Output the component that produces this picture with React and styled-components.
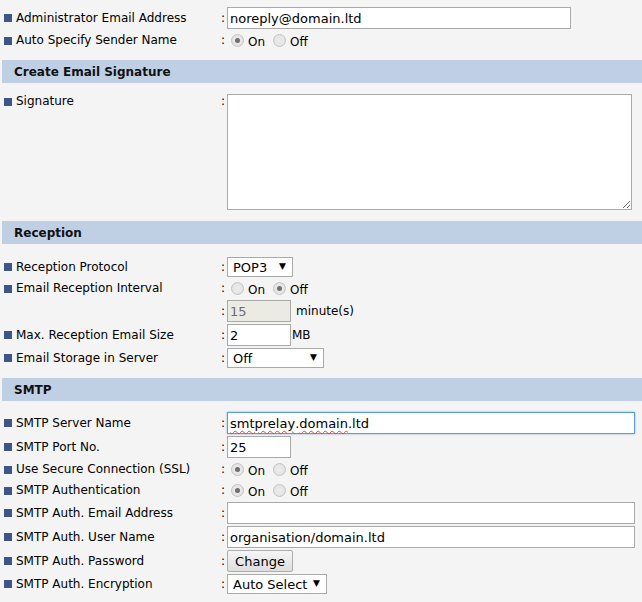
import styled, { createGlobalStyle } from "styled-components";
import { useState } from "react";

const GlobalStyle = createGlobalStyle`
body {
  margin: 0;
  background: #f4f4f4;
  font-family: "DejaVu Sans", Verdana, sans-serif;
  font-size: 12px;
  color: #000;
}
`

const Radios = ({ name, value, onChange }) => (
    <RadioGroup>
        <RadioLabel>
            <Radio type="radio" name={name} checked={value} onChange={() => onChange(true)} />
            On
        </RadioLabel>
        <RadioLabel>
            <Radio type="radio" name={name} checked={!value} onChange={() => onChange(false)} />
            Off
        </RadioLabel>
    </RadioGroup>
)

const Dropdown = ({ width, value, options }) => (
    <SelectWrap $w={width}>
        <Select defaultValue={value}>
            {options.map((o) => <option key={o}>{o}</option>)}
        </Select>
        <Arrow>▼</Arrow>
    </SelectWrap>
)

const App = () => {
    const [senderName, setSenderName] = useState(true);
    const [interval, setInterval] = useState(false);
    const [ssl, setSsl] = useState(true);
    const [auth, setAuth] = useState(true);

    return (
        <Page>
            <GlobalStyle />
            <Section $top={6}>
                <Row>
                    <Label>Administrator Email Address</Label>
                    <Colon>:</Colon>
                    <Field><TextInput $w={344} defaultValue="noreply@domain.ltd" /></Field>
                </Row>
                <Row>
                    <Label>Auto Specify Sender Name</Label>
                    <Colon>:</Colon>
                    <Field><Radios name="sender" value={senderName} onChange={setSenderName} /></Field>
                </Row>
            </Section>

            <Band $gap={9}>Create Email Signature</Band>
            <Section $top={10}>
                <Row $top>
                    <Label>Signature</Label>
                    <Colon>:</Colon>
                    <Field><TextArea /></Field>
                </Row>
            </Section>

            <Band $gap={10}>Reception</Band>
            <Section $top={12}>
                <Row>
                    <Label>Reception Protocol</Label>
                    <Colon>:</Colon>
                    <Field><Dropdown width={66} value="POP3" options={["POP3", "IMAP"]} /></Field>
                </Row>
                <Row>
                    <Label>Email Reception Interval</Label>
                    <Colon>:</Colon>
                    <Field><Radios name="interval" value={interval} onChange={setInterval} /></Field>
                </Row>
                <Row>
                    <Label $plain />
                    <Colon>:</Colon>
                    <Field>
                        <TextInput $w={64} defaultValue="15" disabled />
                        <Unit $gap={5}>minute(s)</Unit>
                    </Field>
                </Row>
                <Row>
                    <Label>Max. Reception Email Size</Label>
                    <Colon>:</Colon>
                    <Field>
                        <TextInput $w={64} defaultValue="2" />
                        <Unit>MB</Unit>
                    </Field>
                </Row>
                <Row>
                    <Label>Email Storage in Server</Label>
                    <Colon>:</Colon>
                    <Field><Dropdown width={97} value="Off" options={["Off", "On"]} /></Field>
                </Row>
            </Section>

            <Band $gap={9}>SMTP</Band>
            <Section $top={10}>
                <Row>
                    <Label>SMTP Server Name</Label>
                    <Colon>:</Colon>
                    <Field>
                        {/* focused field, with the spell check marks */}
                        <FakeInput role="textbox" $w={408} $focus>
                            <Typo>smtprelay</Typo>.<Typo>domain</Typo>.ltd
                        </FakeInput>
                    </Field>
                </Row>
                <Row>
                    <Label>SMTP Port No.</Label>
                    <Colon>:</Colon>
                    <Field><TextInput $w={64} defaultValue="25" /></Field>
                </Row>
                <Row>
                    <Label>Use Secure Connection (SSL)</Label>
                    <Colon>:</Colon>
                    <Field><Radios name="ssl" value={ssl} onChange={setSsl} /></Field>
                </Row>
                <Row>
                    <Label>SMTP Authentication</Label>
                    <Colon>:</Colon>
                    <Field><Radios name="auth" value={auth} onChange={setAuth} /></Field>
                </Row>
                <Row>
                    <Label>SMTP Auth. Email Address</Label>
                    <Colon>:</Colon>
                    <Field><TextInput $w={408} defaultValue="" /></Field>
                </Row>
                <Row>
                    <Label>SMTP Auth. User Name</Label>
                    <Colon>:</Colon>
                    <Field><TextInput $w={408} defaultValue="organisation/domain.ltd" /></Field>
                </Row>
                <Row>
                    <Label>SMTP Auth. Password</Label>
                    <Colon>:</Colon>
                    <Field><Button type="button">Change</Button></Field>
                </Row>
                <Row>
                    <Label>SMTP Auth. Encryption</Label>
                    <Colon>:</Colon>
                    <Field><Dropdown width={100} value="Auto Select" options={["Auto Select", "SSL/TLS", "None"]} /></Field>
                </Row>
            </Section>
        </Page>
    )
}

const Page = styled.div`
width: 642px;
height: 602px;
overflow: hidden;
`
const Section = styled.div`
padding-top: ${(p) => p.$top || 0}px;
`
const Band = styled.div`
margin: ${(p) => p.$gap}px 0 0 2px;
height: 23px;
background: #bfcfe4;
display: flex;
align-items: center;
padding-left: 12px;
font-weight: bold;
font-size: 12px;
color: #111;
`
const Row = styled.div`
display: grid;
grid-template-columns: 221px 6px 1fr;
align-items: ${(p) => (p.$top ? "start" : "center")};
padding: 1px 0;
`
const Label = styled.div`
display: flex;
align-items: center;
padding-left: 4px;
gap: 4px;
line-height: 15px;
&::before {
  content: "";
  width: 8px;
  height: 8px;
  background: #3d5687;
  visibility: ${(p) => (p.$plain ? "hidden" : "visible")};
}
`
const Colon = styled.div`
line-height: 15px;
`
const Field = styled.div`
display: flex;
align-items: center;
`
const TextInput = styled.input`
box-sizing: border-box;
width: ${(p) => p.$w}px;
height: 22px;
margin: 0;
padding: 0 2px;
border: 1px solid #a9a9a9;
background: #fff;
font-family: "DejaVu Sans", Verdana, sans-serif;
font-size: 13px;
color: #000;
outline: none;
&:disabled {
  background: #ebebe4;
  color: #6d6d6d;
}
`
const FakeInput = styled.div`
box-sizing: border-box;
width: ${(p) => p.$w}px;
height: 22px;
padding: 0 2px;
display: flex;
align-items: center;
border: 1px solid ${(p) => (p.$focus ? "#5b9dd9" : "#a9a9a9")};
box-shadow: ${(p) => (p.$focus ? "0 0 2px #8cb8e4" : "none")};
background: #fff;
font-size: 13px;
white-space: pre;
`
const Typo = styled.span`
text-decoration: underline wavy #e0443e;
text-decoration-thickness: 1px;
text-underline-offset: 2px;
`
const TextArea = styled.textarea`
box-sizing: border-box;
width: 405px;
height: 116px;
margin: 0;
border: 1px solid #a9a9a9;
background: #fff;
resize: both;
display: block;
`
const SelectWrap = styled.div`
position: relative;
width: ${(p) => p.$w}px;
height: 20px;
`
const Select = styled.select`
appearance: none;
box-sizing: border-box;
width: 100%;
height: 100%;
margin: 0;
padding: 0 0 0 5px;
border: 1px solid #a9a9a9;
border-radius: 0;
background: #fff;
font-family: "DejaVu Sans", Verdana, sans-serif;
font-size: 13px;
color: #000;
outline: none;
`
const Arrow = styled.span`
position: absolute;
right: 7px;
top: 4px;
font-size: 9px;
pointer-events: none;
`
const RadioGroup = styled.div`
display: flex;
align-items: center;
height: 19px;
padding-left: 4px;
gap: 8px;
`
const RadioLabel = styled.label`
display: flex;
align-items: center;
gap: 4px;
padding-top: 2px;
`
const Radio = styled.input`
appearance: none;
box-sizing: border-box;
width: 13px;
height: 13px;
margin: -3px 0 0 0;
border: 1px solid #c3c3c3;
border-radius: 50%;
background: radial-gradient(circle, #ececec 0%, #e0e0e0 100%);
display: grid;
place-items: center;
&:checked::after {
  content: "";
  width: 5px;
  height: 5px;
  border-radius: 50%;
  background: #6f6f6f;
}
`
const Unit = styled.span`
margin-left: ${(p) => p.$gap || 1}px;
font-size: 12px;
`
const Button = styled.button`
box-sizing: border-box;
width: 66px;
height: 22px;
margin: 0;
padding: 0;
border: 1px solid #adadad;
border-radius: 2px;
background: linear-gradient(#f6f6f6, #dedede);
font-family: "DejaVu Sans", Verdana, sans-serif;
font-size: 13px;
color: #000;
`

export default App;
